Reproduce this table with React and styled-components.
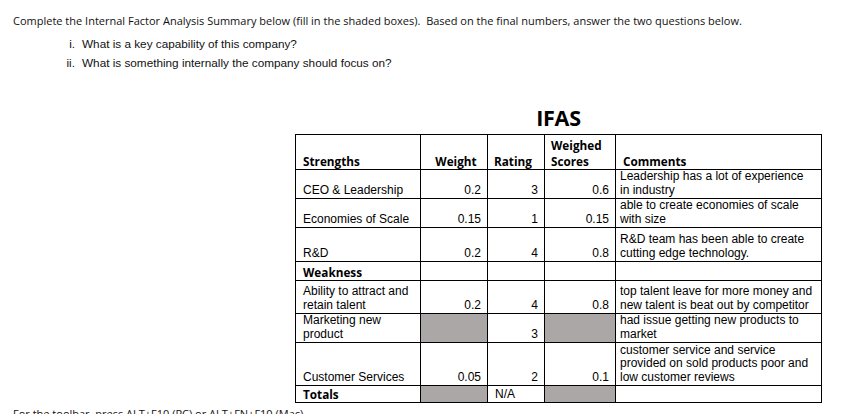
import React from 'react'
import styled, { createGlobalStyle } from 'styled-components'

const GlobalStyle = createGlobalStyle`
  html, body {
    margin: 0;
    padding: 0;
    background: #fff;
  }
  body {
    font-family: "Open Sans", "Noto Sans", sans-serif;
    color: #111;
    overflow: hidden;
  }
`

const Page = styled.div`
  width: 867px;
  height: 414px;
  overflow: hidden;
  padding: 13px 0 0 13px;
  box-sizing: border-box;
`

const Intro = styled.p`
  margin: 0;
  font-size: 11px;
  line-height: 16px;
  color: #111;
`

const Questions = styled.ol`
  margin: 5px 0 0 0;
  padding: 0;
  list-style: none;
`

const Question = styled.li`
  display: flex;
  font-family: "Liberation Sans", Arial, sans-serif;
  font-size: 11.75px;
  line-height: 19px;
  color: #111;
`

const Marker = styled.span`
  width: 69px;
  padding-right: 7px;
  text-align: right;
  box-sizing: border-box;
`

const Sheet = styled.div`
  width: 527px;
  margin: 35px 0 0 282px;
`

const Title = styled.div`
  text-align: center;
  font-weight: 700;
  font-size: 21.5px;
  line-height: 22px;
  height: 27px;
  letter-spacing: -0.3px;
  color: #000;
`

const Table = styled.table`
  border-collapse: collapse;
  table-layout: fixed;
  width: 527px;
  font-family: "Liberation Sans", Arial, sans-serif;
  font-size: 12px;
  color: #000;
`

const Row = styled.tr`
  height: ${p => p.$h}px;
`

const Cell = styled.td`
  border: 1px solid #000;
  padding: 0 ${p => p.$num ? 6 : 3}px ${p => p.$bold ? 0 : 1}px ${p => p.$pad ?? 7}px;
  vertical-align: bottom;
  line-height: ${p => p.$bold ? 16 : 13.5}px;
  text-align: ${p => p.$num ? 'right' : p.$center ? 'center' : 'left'};
  background: ${p => p.$shaded ? '#aaa7a6' : 'transparent'};
  font-family: ${p => p.$bold ? '"Open Sans", "Noto Sans", sans-serif' : 'inherit'};
  font-weight: ${p => p.$bold ? 700 : 400};
  font-size: ${p => p.$bold ? '11.75px' : 'inherit'};
  white-space: ${p => p.$nowrap ? 'nowrap' : 'normal'};
  overflow: hidden;
`

const Footer = styled.div`
  margin: 4px 0 0 0;
  font-size: 11px;
  line-height: 14px;
  color: #111;
`

const rows = [
  { h: 29, name: 'CEO & Leadership', w: '0.2', r: '3', s: '0.6', c: <>Leadership has a lot of experience<br />in industry</> },
  { h: 29, name: 'Economies of Scale', w: '0.15', r: '1', s: '0.15', c: <>able to create economies of scale<br />with size</> },
  { h: 34, name: 'R&D', w: '0.2', r: '4', s: '0.8', c: <>R&amp;D team has been able to create<br />cutting edge technology.</> },
]

const weak = [
  { h: 33, name: <>Ability to attract and<br />retain talent</>, w: '0.2', r: '4', s: '0.8', c: <>top talent leave for more money and<br />new talent is beat out by competitor</> },
  { h: 29, name: <>Marketing new<br />product</>, shaded: true, r: '3', c: <>had issue getting new products to<br />market</> },
  { h: 43, name: 'Customer Services', w: '0.05', r: '2', s: '0.1', c: <>customer service and service<br />provided on sold products poor and<br />low customer reviews</> },
]

const FactorRow = ({ f }) => (
  <Row $h={f.h}>
    <Cell>{f.name}</Cell>
    <Cell $num $shaded={f.shaded}>{f.w}</Cell>
    <Cell $num>{f.r}</Cell>
    <Cell $num $shaded={f.shaded}>{f.s}</Cell>
    <Cell $pad={4} $nowrap>{f.c}</Cell>
  </Row>
)

export default function App() {
  return (
    <Page>
      <GlobalStyle />
      <Intro>
        Complete the Internal Factor Analysis Summary below (fill in the shaded boxes).&nbsp; Based on the final numbers, answer the two questions below.
      </Intro>
      <Questions>
        <Question><Marker>i.</Marker>What is a key capability of this company?</Question>
        <Question><Marker>ii.</Marker>What is something internally the company should focus on?</Question>
      </Questions>
      <Sheet>
        <Title>IFAS</Title>
        <Table>
          <colgroup>
            <col style={{ width: 125 }} />
            <col style={{ width: 67 }} />
            <col style={{ width: 57 }} />
            <col style={{ width: 71 }} />
            <col style={{ width: 206 }} />
          </colgroup>
          <tbody>
            <Row $h={35}>
              <Cell $bold>Strengths</Cell>
              <Cell $bold $center>Weight</Cell>
              <Cell $bold $pad={6}>Rating</Cell>
              <Cell $bold $pad={6}>Weighed<br />Scores</Cell>
              <Cell $bold>Comments</Cell>
            </Row>
            {rows.map((f, i) => <FactorRow key={i} f={f} />)}
            <Row $h={19}>
              <Cell $bold>Weakness</Cell>
              <Cell />
              <Cell />
              <Cell />
              <Cell />
            </Row>
            {weak.map((f, i) => <FactorRow key={i} f={f} />)}
            <Row $h={17}>
              <Cell $bold>Totals</Cell>
              <Cell $shaded />
              <Cell>N/A</Cell>
              <Cell $shaded />
              <Cell />
            </Row>
          </tbody>
        </Table>
      </Sheet>
      <Footer>For the toolbar, press ALT+F10 (PC) or ALT+FN+F10 (Mac).</Footer>
    </Page>
  )
}
